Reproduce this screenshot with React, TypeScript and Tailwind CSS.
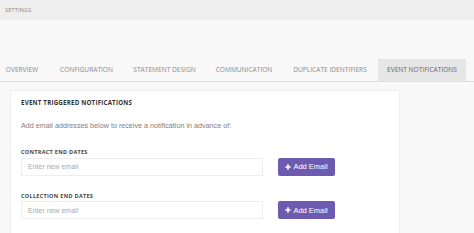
import React from 'react';

const tabs = [
  { label: 'OVERVIEW', w: 'w-[56px]' },
  { label: 'CONFIGURATION', w: 'w-[73px]' },
  { label: 'STATEMENT DESIGN', w: 'w-[83px]' },
  { label: 'COMMUNICATION', w: 'w-[76px]' },
  { label: 'DUPLICATE IDENTIFIERS', w: 'w-[96px]' },
  { label: 'EVENT NOTIFICATIONS', w: 'w-[88px]', active: true },
];

const EmailRow = ({ label }: { label: string }) => (
  <div className="flex flex-col">
    <div className="text-[5.5px] font-bold tracking-[0.3px] text-[#444] leading-none">{label}</div>
    <div className="mt-[2px] flex items-center">
      <input
        className="h-[18px] w-[242px] border border-[#eeeeee] bg-white px-[6px] text-[7px] text-[#555] placeholder-[#aaaaaa] outline-none font-['Liberation_Sans',sans-serif]"
        placeholder="Enter new email"
      />
      <button className="ml-[15px] flex h-[18px] w-[57px] items-center justify-center gap-[2px] rounded-[2px] bg-[#6d5bb0] text-[7.5px] text-white font-['Liberation_Sans',sans-serif]">
        <svg viewBox="0 0 10 10" className="h-[6px] w-[6px]" fill="white">
          <rect x="3.6" y="0.5" width="2.8" height="9" rx="0.6" />
          <rect x="0.5" y="3.6" width="9" height="2.8" rx="0.6" />
        </svg>
        <span>Add Email</span>
      </button>
    </div>
  </div>
);

const App = () => {
  return (
    <div className="h-[233px] w-[474px] overflow-hidden bg-[#f8f8f8] font-['Open_Sans',sans-serif]">
      <div className="flex h-[20px] items-center bg-[#eeeeee] px-[5px] text-[5.5px] text-[#888] tracking-[0.2px]">
        SETTINGS
      </div>

      <div className="mt-[39px] flex h-[23px] border-b border-[#dddddd] -ml-[6px]">
        {tabs.map((t) => (
          <div
            key={t.label}
            className={`${t.w} flex items-center justify-center text-[6.6px] text-[#8a8a8a] ${t.active ? 'bg-[#e6e6e6] text-[#666]' : ''}`}
          >
            {t.label}
          </div>
        ))}
      </div>

      <div className="ml-[10px] mt-[8px] h-[200px] w-[390px] border border-[#efefef] bg-white px-[10px] pt-[9px]">
        <div className="text-[6.2px] font-bold tracking-[0.2px] text-[#333] leading-none">
          EVENT TRIGGERED NOTIFICATIONS
        </div>
        <div className="mt-[16px] text-[7.2px] text-[#808080] leading-none font-['Liberation_Sans',sans-serif]">
          Add email addresses below to receive a notification in advance of:
        </div>
        <div className="mt-[21px] flex flex-col gap-[18px]">
          <EmailRow label="CONTRACT END DATES" />
          <EmailRow label="COLLECTION END DATES" />
        </div>
      </div>
    </div>
  );
};

export default App;
